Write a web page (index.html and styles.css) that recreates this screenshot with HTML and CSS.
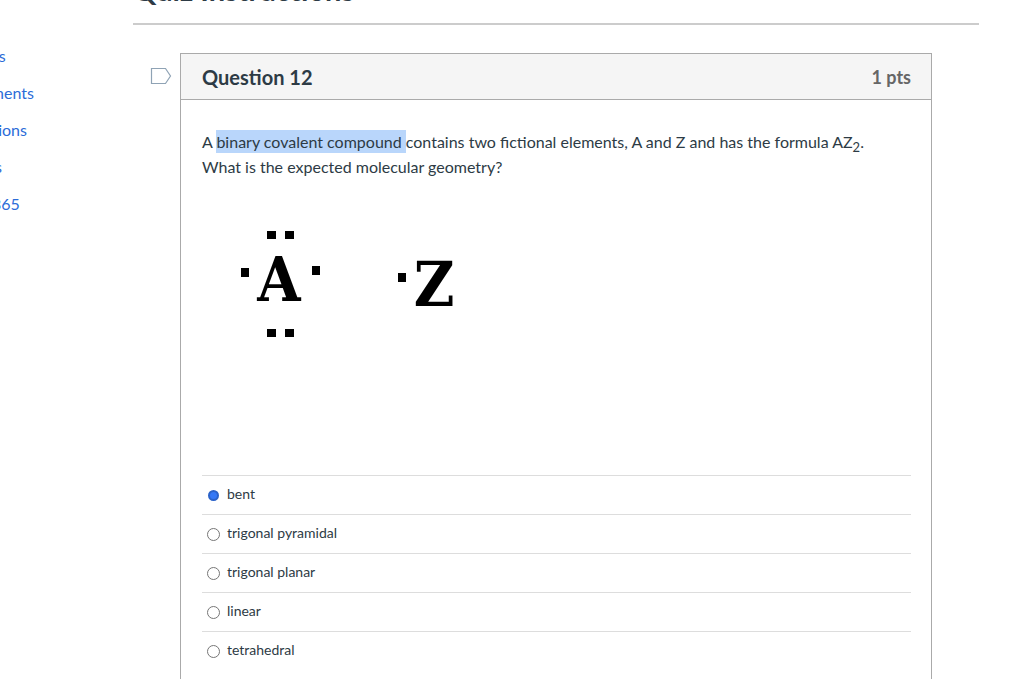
FILE: index.html
```
<!DOCTYPE html>
<html lang="en">
<head>
    <meta charset="UTF-8">
    <meta name="viewport" content="width=device-width, initial-scale=1.0">
    <title>Quiz Instructions</title>
    <link rel="stylesheet" href="styles.css">
</head>
<body>
    <nav class="course-nav">
        <a href="#">Modules</a>
        <a href="#">Assignments</a>
        <a href="#">Discussions</a>
        <a href="#">Syllabus</a>
        <a href="#">Office 365</a>
    </nav>
    <main class="content">
        <h1>Quiz Instructions</h1>
        <div class="question-row">
            <button type="button" class="flag" aria-label="Flag question">
                <svg width="22" height="18" viewBox="0 0 22 18">
                    <path d="M1.5 1.5H15.5L20.5 9L15.5 16.5H1.5Z" fill="#fff" stroke="#8fa3b5" stroke-width="1.2"/>
                </svg>
            </button>
            <form class="question">
                <header class="question-header">
                    <h2>Question 12</h2>
                    <span class="points">1 pts</span>
                </header>
                <div class="question-body">
                    <p>A <mark>binary covalent compound </mark>contains two fictional elements, A and Z and has the formula AZ<sub>2</sub>.<br>What is the expected molecular geometry?</p>
                    <svg class="lewis" width="270" height="270" viewBox="0 0 270 270">
                        <!-- A with six valence electrons -->
                        <rect x="65" y="26" width="9" height="8"/>
                        <rect x="83" y="26" width="9" height="8"/>
                        <rect x="39" y="63" width="8" height="9"/>
                        <rect x="110" y="61" width="8" height="9"/>
                        <text x="77" y="96" text-anchor="middle">A</text>
                        <rect x="65" y="124" width="9" height="8"/>
                        <rect x="83" y="124" width="9" height="8"/>
                        <!-- Z with one -->
                        <rect x="196" y="68" width="8" height="9"/>
                        <text x="232" y="101" text-anchor="middle">Z</text>
                    </svg>
                    <div class="answers">
                        <label class="answer"><input type="radio" name="answer" checked>bent</label>
                        <label class="answer"><input type="radio" name="answer">trigonal pyramidal</label>
                        <label class="answer"><input type="radio" name="answer">trigonal planar</label>
                        <label class="answer"><input type="radio" name="answer">linear</label>
                        <label class="answer"><input type="radio" name="answer">tetrahedral</label>
                    </div>
                </div>
            </form>
        </div>
    </main>
</body>
</html>
```
FILE: styles.css
```
body {
    display: flex;
    margin: 0;
    overflow: hidden;
    font-family: Lato, "Liberation Sans", sans-serif;
    font-size: 16px;
    color: #2d3b45;
    background-color: #fff;
}

.course-nav {
    flex: none;
    width: 188px;
    margin-left: -55px;
    padding-top: 37px;
}

.course-nav a {
    display: block;
    line-height: 37px;
    color: #2b6cd8;
    text-decoration: none;
}

.content {
    flex: 1;
    min-width: 0;
    margin-right: 45px;
}

h1 {
    margin: -28px 0 28px;
    padding-bottom: 15px;
    border-bottom: 2px solid #ccc;
    font-size: 29px;
    line-height: 36px;
}

.question-row {
    display: flex;
    align-items: flex-start;
    margin-right: 47px;
}

.flag {
    flex: none;
    width: 22px;
    height: 18px;
    margin: 14px 8px 0 17px;
    padding: 0;
    border: none;
    background: none;
    cursor: pointer;
}

.flag svg {
    display: block;
}

.question {
    flex: 1;
    border: 1px solid #aaa;
}

.question-header {
    display: flex;
    justify-content: space-between;
    align-items: center;
    height: 45px;
    padding: 0 20px 0 21px;
    border-bottom: 1px solid #aaa;
    background-color: #f5f5f5;
}

h2 {
    margin: 0;
    font-size: 20px;
}

.points {
    font-size: 18px;
    font-weight: bold;
    color: #666;
}

.question-body {
    padding: 29px 20px 30px 21px;
}

.question-body p {
    margin: 0 0 26px;
    line-height: 25px;
}

mark {
    padding: 2px 0;
    color: inherit;
    background-color: #b9d6fb;
}

sub {
    font-size: 13px;
    line-height: 0;
}

.lewis {
    display: block;
    font-family: "DejaVu Serif Condensed", "DejaVu Serif", serif;
    font-size: 62px;
    font-weight: bold;
}

.answer {
    display: flex;
    align-items: center;
    height: 34px;
    padding-bottom: 4px;
    border-top: 1px solid #ddd;
    font-size: 14px;
}

.answer input {
    appearance: none;
    box-sizing: border-box;
    width: 13px;
    height: 13px;
    margin: 4px 7px 0 5px;
    border: 1px solid #767676;
    border-radius: 50%;
    background-color: #fff;
}

.answer input:checked {
    width: 11px;
    height: 11px;
    margin-right: 8px;
    margin-left: 6px;
    border: 2px solid #2a62c9;
    background-color: #3478f6;
}
```
